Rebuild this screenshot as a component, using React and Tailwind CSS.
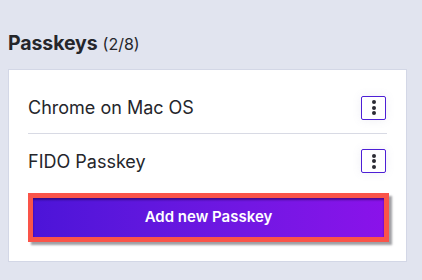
import React from "react";

function Kebab() {
  return (
    <button className="flex h-[24px] w-[25px] flex-col items-center justify-center gap-[1.5px] rounded-[2px] border-[1.5px] border-[#4d1fd6] bg-white shadow-[0_0_10px_rgba(120,120,170,0.12)]">
      <span className="h-[4px] w-[4px] rounded-full bg-[#2b2b33]" />
      <span className="h-[4px] w-[4px] rounded-full bg-[#2b2b33]" />
      <span className="h-[4px] w-[4px] rounded-full bg-[#2b2b33]" />
    </button>
  );
}

export default function App() {
  return (
    <div
      className="h-[280px] w-[422px] bg-[#e1e4ef] pl-[8px] pt-[31px]"
      style={{ fontFamily: "Inter, 'Open Sans', sans-serif" }}
    >
      <div className="flex items-baseline gap-[5px] text-[#25262b]">
        <span className="text-[19.5px] font-bold leading-[24px] tracking-[-0.1px]">Passkeys</span>
        <span className="text-[16px]">(2/8)</span>
      </div>
      <div className="mt-[13px] w-[399px] border border-[#d3d7e6] bg-white px-[19px] pt-[12px] pb-[19px]">
        <div className="flex h-[52px] items-center justify-between border-b border-[#d8dae4] pr-[1px]">
          <span className="text-[18px] text-[#25262b]">Chrome on Mac OS</span>
          <Kebab />
        </div>
        <div className="flex h-[54px] items-center justify-between pr-[1px]">
          <span className="text-[18px] text-[#25262b]">FIDO Passkey</span>
          <Kebab />
        </div>
        <div className="mt-[5px] w-[361px] border-[5px] border-[#fa5449] shadow-[3px_3px_2px_rgba(80,80,90,0.55)]">
          <button className="flex h-[39px] w-full items-center justify-center bg-gradient-to-r from-[#4c14d8] to-[#8a12ea] text-[15px] font-semibold text-white shadow-[inset_0_2px_2px_rgba(20,0,60,0.5)]">
            Add new Passkey
          </button>
        </div>
      </div>
    </div>
  );
}
